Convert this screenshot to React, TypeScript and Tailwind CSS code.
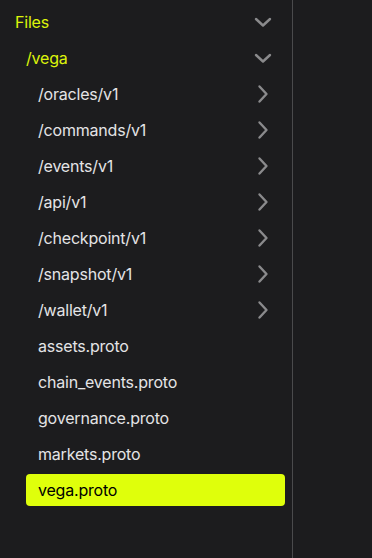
import React from 'react';

type Node = {
  name: string;
  kind: 'dir' | 'file';
  active?: boolean;
};

const children: Node[] = [
  { name: '/oracles/v1', kind: 'dir' },
  { name: '/commands/v1', kind: 'dir' },
  { name: '/events/v1', kind: 'dir' },
  { name: '/api/v1', kind: 'dir' },
  { name: '/checkpoint/v1', kind: 'dir' },
  { name: '/snapshot/v1', kind: 'dir' },
  { name: '/wallet/v1', kind: 'dir' },
  { name: 'assets.proto', kind: 'file' },
  { name: 'chain_events.proto', kind: 'file' },
  { name: 'governance.proto', kind: 'file' },
  { name: 'markets.proto', kind: 'file' },
  { name: 'vega.proto', kind: 'file', active: true },
];

function ChevronDown() {
  return (
    <svg width="20" height="20" viewBox="0 0 20 20" fill="none" className="shrink-0">
      <polyline
        points="3,7 10,13.5 17,7"
        stroke="#8a8a8c"
        strokeWidth="2.4"
        strokeLinecap="round"
        strokeLinejoin="round"
      />
    </svg>
  );
}

function ChevronRight() {
  return (
    <svg width="20" height="20" viewBox="0 0 20 20" fill="none" className="shrink-0">
      <polyline
        points="6.5,2.5 13.5,10 6.5,17.5"
        stroke="#8a8a8c"
        strokeWidth="2.4"
        strokeLinecap="round"
        strokeLinejoin="round"
      />
    </svg>
  );
}

export default function App() {
  return (
    <div
      className="flex h-[558px] w-[372px] bg-[#1c1c1e] text-[16px] tracking-[-0.2px]"
      style={{ fontFamily: 'Inter, "Noto Sans", sans-serif' }}
    >
      <aside className="w-[293px] shrink-0 border-r border-[#4a4a4c] pr-[7px] pt-[4px]">
        <div className="flex h-9 items-center justify-between pl-[15px] pr-[12px] text-[#dcf40a]">
          <span>Files</span>
          <ChevronDown />
        </div>
        <div className="flex h-9 items-center justify-between pl-[26px] pr-[12px] text-[#dcf40a]">
          <span>/vega</span>
          <ChevronDown />
        </div>
        <ul className="pl-[26px]">
          {children.map((node) => (
            <li key={node.name} className="flex h-9 items-center">
              <div
                className={
                  node.active
                    ? 'flex h-8 w-full items-center justify-between rounded bg-[#dfff0b] pl-3 pr-3 text-black'
                    : 'flex h-8 w-full items-center justify-between pl-3 pr-3 text-[#e4e4e6]'
                }
              >
                <span>{node.name}</span>
                {node.kind === 'dir' && <ChevronRight />}
              </div>
            </li>
          ))}
        </ul>
      </aside>
      <main className="flex-1" />
    </div>
  );
}
